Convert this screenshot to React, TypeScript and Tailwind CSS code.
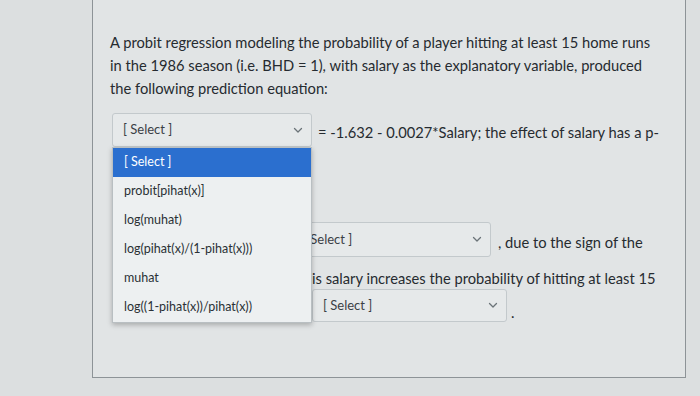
const options = [
  "[ Select ]",
  "probit[pihat(x)]",
  "log(muhat)",
  "log(pihat(x)/(1-pihat(x)))",
  "muhat",
  "log((1-pihat(x))/pihat(x))",
];

const Chevron = () => (
  <svg width="10" height="7" viewBox="0 0 10 7" fill="none" className="shrink-0">
    <path d="M1.5 1.5L5 5l3.5-3.5" stroke="#6b7378" strokeWidth="1.3" strokeLinecap="round" strokeLinejoin="round" />
  </svg>
);

const SelectBox = ({ className }: { className: string }) => (
  <div
    className={`flex items-center justify-between rounded-[3px] border border-[#c3c9cc] bg-[#e6e9ea] pl-[10px] pr-[8px] text-[13px] text-[#3a4045] ${className}`}
  >
    <span>[ Select ]</span>
    <Chevron />
  </div>
);

export default function App() {
  return (
    <div
      className="h-[396px] w-[700px] overflow-hidden bg-[#dcdfe0] text-[#262b30]"
      style={{ fontFamily: "Lato, 'Open Sans', sans-serif" }}
    >
      <div className="relative ml-[92px] h-[378px] w-[594px] border-x border-b border-[#8d9397] bg-[#e1e4e5] pl-[17px] pt-[31px]">
        <p className="whitespace-nowrap text-[14.7px] leading-[23px]">
          A probit regression modeling the probability of a player hitting at least 15 home runs
          <br />
          in the 1986 season (i.e. BHD = 1), with salary as the explanatory variable, produced
          <br />
          the following prediction equation:
        </p>

        {/* Row 1 */}
        <div className="mt-[13px] flex h-[34px] items-center whitespace-nowrap text-[14.7px]">
          <SelectBox className="ml-[2px] h-[34px] w-[200px]" />
          <span className="ml-[6px] pt-[4px]">= -1.632 - 0.0027*Salary; the effect of salary has a p-</span>
        </div>

        {/* Row 2 */}
        <div className="mt-[75px] flex h-[35px] items-center whitespace-nowrap text-[14.7px]">
          <span className="w-[182px] shrink-0" />
          <SelectBox className="h-[35px] w-[199px]" />
          <span className="ml-[7px] pt-[6px]">, due to the sign of the</span>
        </div>

        {/* Row 3 */}
        <div className="mt-[11px] h-[21px] whitespace-nowrap pl-[202px] text-[14.7px] leading-[21px]">
          is salary increases the probability of hitting at least 15
        </div>

        {/* Row 4 */}
        <div className="flex h-[33px] items-end text-[14.7px]">
          <span className="w-[202px] shrink-0" />
          <SelectBox className="h-[33px] w-[195px]" />
          <span className="ml-[4px] leading-[20px]">.</span>
        </div>

        {/* Open dropdown menu */}
        <ul className="absolute left-[19px] top-[147px] w-[200px] border border-[#b9bfc2] bg-[#edf0f1] text-[12.5px] text-[#2a3035] shadow-[0_2px_5px_rgba(0,0,0,0.25)]">
          {options.map((o, i) => (
            <li
              key={o}
              className={`flex h-[29px] items-center pl-[11px] ${i === 0 ? "bg-[#2b6fcf] text-white" : ""}`}
            >
              {o}
            </li>
          ))}
        </ul>
      </div>
    </div>
  );
}
